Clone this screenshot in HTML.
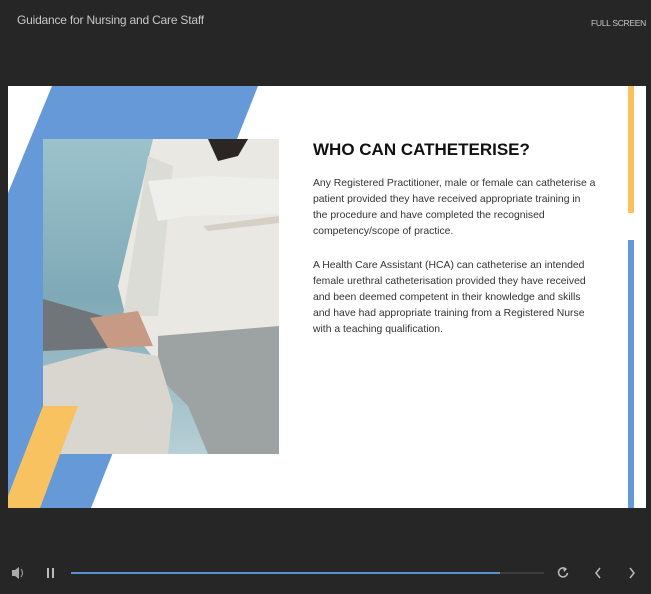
<!DOCTYPE html>
<html><head><meta charset="utf-8"><style>
*{margin:0;padding:0;box-sizing:border-box}
body{width:651px;height:594px;background:#262626;position:relative;overflow:hidden;font-family:"Liberation Sans",sans-serif}
.t{position:absolute;color:#c8c8c8;white-space:nowrap}
#slide{position:absolute;left:8px;top:86px;width:638px;height:422px;background:#fff;overflow:hidden}
h1{position:absolute;left:305px;top:54px;font-size:17px;font-weight:bold;color:#111;white-space:nowrap}
.p{position:absolute;left:305px;font-size:10.4px;line-height:16px;color:#333;white-space:nowrap}
</style></head><body>
<div class="t" style="left:17px;top:13px;font-size:12px;letter-spacing:-0.2px">Guidance for Nursing and Care Staff</div>
<div class="t" style="left:591px;top:18px;font-size:8.5px;letter-spacing:-0.3px">FULL SCREEN</div>
<div id="slide">
<svg width="638" height="422" style="position:absolute;left:0;top:0">
<polygon points="44,0 250,0 83,422 0,422 0,107" fill="#6699d8"/>
<defs><linearGradient id="bg" x1="0" y1="0" x2="0" y2="1"><stop offset="0" stop-color="#9cc3cc"/><stop offset="0.5" stop-color="#7fa9b6"/><stop offset="1" stop-color="#b8cfd6"/></linearGradient></defs>
<rect x="35" y="53" width="236" height="315" fill="url(#bg)"/>
<path d="M145,53 L271,53 L271,240 L250,300 L160,290 L120,240 L110,200 Z" fill="#e9e8e3"/>
<path d="M140,70 L115,230 L150,230 L165,80 Z" fill="#dcdcd7"/>
<path d="M150,250 L271,240 L271,368 L200,368 L180,320 L150,290 Z" fill="#9da2a2"/>
<path d="M35,280 L35,368 L160,368 L165,320 L150,270 L100,262 Z" fill="#d9d6d0"/>
<path d="M35,213 L95,230 L100,262 L35,265 Z" fill="#6f7578"/>
<path d="M82,232 L130,225 L145,260 L100,262 Z" fill="#c79a85"/>
<path d="M140,95 L200,90 L271,93 L271,128 L180,130 L150,135 Z" fill="#eeeeea"/>
<path d="M195,140 L271,130 L271,137 L200,145 Z" fill="#d5cfc5"/>
<path d="M200,53 L240,53 L230,70 L210,75 Z" fill="#2b2624"/>
<polygon points="35,320 70,320 32,422 0,422 0,410" fill="#f9c260"/>
<rect x="620" y="0" width="6" height="127" fill="#f9c260"/>
<rect x="620" y="154" width="6" height="268" fill="#6699d8"/>
</svg>
<h1>WHO CAN CATHETERISE?</h1>
<div class="p" style="top:90px">Any Registered Practitioner, male or female can catheterise a<br>patient provided they have received appropriate training in<br>the procedure and have completed the recognised<br>competency/scope of practice.</div>
<div class="p" style="top:172px">A Health Care Assistant (HCA) can catheterise an intended<br>female urethral catheterisation provided they have received<br>and been deemed competent in their knowledge and skills<br>and have had appropriate training from a Registered Nurse<br>with a teaching qualification.</div>
</div>
<svg width="651" height="30" style="position:absolute;left:0;top:560px">
<path d="M12,10 h3 l4,-3 v12 l-4,-3 h-3 z" fill="#aaa"/><path d="M21,9 q3,4 0,8" stroke="#aaa" fill="none"/>
<rect x="47" y="8" width="2" height="10" fill="#bbb"/><rect x="52" y="8" width="2" height="10" fill="#bbb"/>
<rect x="71" y="12" width="473" height="2" fill="#3c3c3c"/><rect x="71" y="12" width="429" height="2" fill="#5a8fd0"/>
<path d="M566,9 a4.5,4.5 0 1 0 1.5,4" stroke="#bbb" stroke-width="1.5" fill="none"/><path d="M563,7 l4,2 -3,3z" fill="#bbb"/>
<path d="M600,8 l-4,5 4,5" stroke="#bbb" stroke-width="1.5" fill="none"/>
<path d="M630,8 l4,5 -4,5" stroke="#bbb" stroke-width="1.5" fill="none"/>
</svg>
</body></html>
